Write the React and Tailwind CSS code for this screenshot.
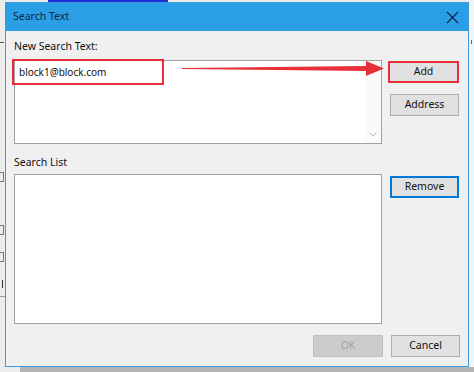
import React from "react";

const font = { fontFamily: '"Noto Sans", "Liberation Sans", sans-serif' };

function WinButton({ children, className = "", border = "border border-[#adadad]" }) {
  return (
    <div
      className={`h-[22px] flex items-center justify-center text-[10.5px] text-[#111] bg-[#e1e1e1] ${border} ${className}`}
    >
      {children}
    </div>
  );
}

export default function App() {
  return (
    <div
      className="relative w-[474px] h-[372px] overflow-hidden bg-[#ececec]"
      style={font}
    >
      {/* Background window peeking out */}
      <div className="absolute left-[48px] top-0 w-[120px] h-[2px] bg-[#1f2fd8]" />
      <div className="absolute left-0 top-[42px] w-[4px] h-[1px] bg-[#555]" />
      <div className="absolute left-0 top-[172px] w-[4px] h-[10px] border border-l-0 border-[#777]" />
      <div className="absolute left-0 top-[225px] w-[4px] h-[10px] border border-l-0 border-[#777]" />
      <div className="absolute left-0 top-[252px] w-[4px] h-[10px] border border-l-0 border-[#777]" />
      <div className="absolute left-[2px] top-[280px] w-[1px] h-[8px] bg-[#333]" />
      <div className="absolute left-0 top-[296px] w-[5px] h-[1px] bg-[#999]" />
      <div className="absolute right-0 top-0 w-[5px] h-full bg-[#f4f4f4]" />
      <div className="absolute right-[2px] top-[40px] w-[1px] h-[4px] bg-[#666]" />
      <div className="absolute left-[20px] right-0 bottom-0 h-[5px] bg-[#b4b4b4]" />

      {/* Dialog */}
      <div className="relative ml-[5px] mt-[2px] w-[464px] h-[365px] border border-[#3a9be0] bg-[#f0f0f0] flex flex-col">
        {/* Title bar */}
        <div className="h-[28px] bg-[#2b9fe6] flex items-center justify-between pl-[7px] pr-[8px]">
          <span className="text-[10.5px] text-[#0c2845]">Search Text</span>
          <svg width="13" height="13" viewBox="0 0 13 13" className="mr-[1px]">
            <path d="M1 1 L12 12 M12 1 L1 12" stroke="#0c2845" strokeWidth="1.3" fill="none" />
          </svg>
        </div>

        {/* Body */}
        <div className="flex pl-[8px] pt-[7px]">
          <div className="w-[368px] flex flex-col">
            <div className="h-[16px] leading-[16px] text-[10.5px] text-[#111]">New Search Text:</div>
            <div className="relative mt-[6px] h-[84px] bg-white border border-[#a0a0a0]">
              <div className="pl-[4px] pt-[3px] text-[10px] leading-[16px] text-[#111]">block1@block.com</div>
              <div className="absolute right-0 top-0 bottom-0 w-[16px] bg-[#fafafa] flex items-end justify-center pb-[6px]">
                <svg width="8" height="5" viewBox="0 0 8 5">
                  <path d="M0.5 0.5 L4 4 L7.5 0.5" stroke="#b8b8b8" strokeWidth="1" fill="none" />
                </svg>
              </div>
              {/* Annotation box */}
              <div className="absolute left-[-3px] top-[-2px] w-[152px] h-[26px] border-2 border-[#e8303a]" />
            </div>
            <div className="mt-[10px] h-[16px] leading-[16px] text-[10.5px] text-[#111]">Search List</div>
            <div className="mt-[4px] h-[150px] bg-white border border-[#a0a0a0]" />
          </div>

          <div className="ml-[8px] w-[69px] flex flex-col">
            <WinButton className="mt-[23px] -ml-[2px] w-[71px]" border="border-2 border-[#e8303a]">Add</WinButton>
            <WinButton className="mt-[11px]">Address</WinButton>
            <WinButton className="mt-[60px]" border="border-2 border-[#0078d7]">Remove</WinButton>
          </div>
        </div>

        {/* Footer */}
        <div className="flex justify-end gap-[8px] pr-[8px] mt-[11px]">
          <div className="w-[70px] h-[22px] flex items-center justify-center text-[10.5px] text-[#a3a3a3] bg-[#cccccc] border border-[#bfbfbf]">
            OK
          </div>
          <WinButton className="w-[69px]">Cancel</WinButton>
        </div>

        {/* Annotation arrow */}
        <svg
          className="absolute left-[175px] top-[55px]"
          width="204"
          height="20"
          viewBox="0 0 204 20"
        >
          <polygon
            points="1,10 185,8 185,3 203,10.5 185,18 185,13 1,11"
            fill="#e8303a"
          />
        </svg>
      </div>
    </div>
  );
}
